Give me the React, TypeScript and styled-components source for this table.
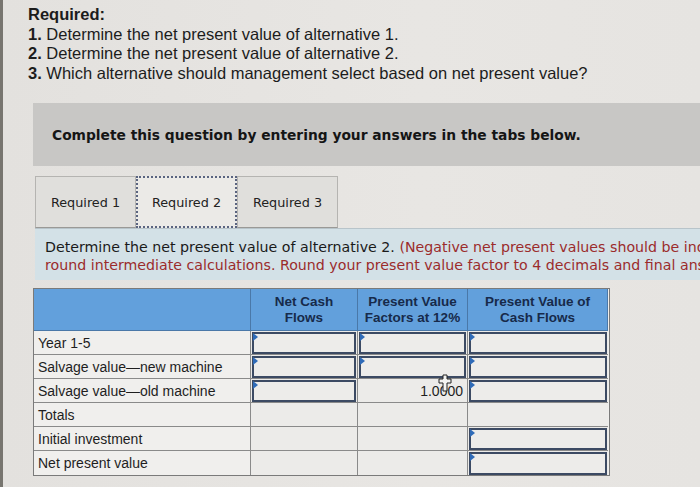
import React from "react";
import styled, { createGlobalStyle } from "styled-components";

const GlobalStyle = createGlobalStyle`
  html, body { margin: 0; padding: 0; }
  body { background: #e5e3e0; }
`;

const Page = styled.div`
  width: 700px;
  height: 487px;
  overflow: hidden;
  box-sizing: border-box;
  border-left: 3px solid #77756f;
  background: linear-gradient(90deg, #e3e1de 0%, #e8e6e3 60%, #e6e4e1 100%);
  display: flex;
  flex-direction: column;
`;

const Required = styled.div`
  padding: 5px 0 0 25px;
  font-family: "Liberation Sans", Arial, sans-serif;
  font-size: 16.5px;
  line-height: 19.5px;
  color: #1c1c1c;
`;

const ReqTitle = styled.div`
  font-weight: 700;
`;

const ReqLine = styled.div`
  & b { font-weight: 700; }
`;

const Banner = styled.div`
  margin: 20px 0 0 30px;
  height: 63px;
  background: #c8c7c5;
  display: flex;
  align-items: center;
  padding-left: 19px;
  font-family: "DejaVu Sans", Verdana, sans-serif;
  font-weight: 700;
  font-size: 13.8px;
  color: #151515;
  white-space: nowrap;
`;

const Tabs = styled.div`
  margin: 10px 0 0 32px;
  display: flex;
  height: 52px;
`;

const Tab = styled.div<{ $active?: boolean }>`
  width: 101px;
  box-sizing: border-box;
  display: flex;
  align-items: center;
  justify-content: center;
  font-family: "DejaVu Sans", Verdana, sans-serif;
  font-size: 12.8px;
  color: #222;
  background: ${(p) => (p.$active ? "#ebeae7" : "#e0dfdc")};
  border: ${(p) => (p.$active ? "2px dotted #5a6480" : "1px solid #b5b4b1")};
  border-bottom: ${(p) => (p.$active ? "2px dotted #5a6480" : "1px solid #9a9996")};
`;

const Instruction = styled.div`
  margin-left: 32px;
  height: 52px;
  box-sizing: border-box;
  background: #d3e1e7;
  border-top: 1px solid #b8c4ca;
  padding: 9px 0 0 10px;
  font-family: "DejaVu Sans", Verdana, sans-serif;
  font-size: 14.2px;
  line-height: 18px;
  color: #1a1a1a;
  white-space: nowrap;
  overflow: hidden;
`;

const Red = styled.span`
  color: #9b2c2c;
`;

const Table = styled.div`
  margin: 8px 0 0 30px;
  width: 575px;
  display: grid;
  grid-template-columns: 217px 107px 110px 140px;
  border: 1px solid #7a7a7a;
  background: #efeeec;
  position: relative;
`;

const Head = styled.div`
  height: 41px;
  background: #62a0dc;
  border-right: 1px solid #4a78a8;
  border-bottom: 1px solid #4a78a8;
  display: flex;
  align-items: center;
  justify-content: center;
  text-align: center;
  font-family: "Liberation Sans", Arial, sans-serif;
  font-weight: 700;
  font-size: 13.5px;
  line-height: 16px;
  color: #172a4a;
  &:last-child { border-right: none; }
`;

const Label = styled.div<{ $last?: boolean }>`
  height: 24px;
  box-sizing: border-box;
  border-right: 1px solid #8a8a8a;
  border-bottom: ${(p) => (p.$last ? "none" : "1px solid #8a8a8a")};
  display: flex;
  align-items: center;
  padding-left: 4px;
  font-family: "Liberation Sans", Arial, sans-serif;
  font-size: 14px;
  color: #1e1e1e;
  background: #f0efed;
`;

const Cell = styled.div<{ $last?: boolean; $end?: boolean }>`
  height: 24px;
  box-sizing: border-box;
  border-right: ${(p) => (p.$end ? "none" : "1px solid #8a8a8a")};
  border-bottom: ${(p) => (p.$last ? "none" : "1px solid #8a8a8a")};
  background: #ecebe9;
  display: flex;
  align-items: center;
  justify-content: flex-end;
  padding-right: 4px;
  font-family: "Liberation Sans", Arial, sans-serif;
  font-size: 14px;
  color: #1e1e1e;
  position: relative;
`;

const InputCell = styled.div<{ $last?: boolean; $end?: boolean }>`
  height: 24px;
  box-sizing: border-box;
  border-right: ${(p) => (p.$end ? "none" : "1px solid #8a8a8a")};
  border-bottom: ${(p) => (p.$last ? "none" : "1px solid #8a8a8a")};
  background: #ecebe9;
  display: flex;
  padding: 1px 1px 0 1px;
  position: relative;
`;

const InputBox = styled.div`
  flex: 1;
  box-sizing: border-box;
  border: 2px solid #3c4a63;
  background: #edecea;
  position: relative;
  &::before {
    content: "";
    position: absolute;
    left: -1px;
    top: -1px;
    border-top: 4px solid transparent;
    border-bottom: 4px solid transparent;
    border-left: 5px solid #2f6bb8;
  }
`;

const Cursor = styled.svg`
  position: absolute;
  right: 14px;
  top: -5px;
`;

type Kind = "in" | "empty" | "factor";

const rows: { label: string; cells: Kind[] }[] = [
  { label: "Year 1-5", cells: ["in", "in", "in"] },
  { label: "Salvage value\u2014new machine", cells: ["in", "in", "in"] },
  { label: "Salvage value\u2014old machine", cells: ["in", "factor", "in"] },
  { label: "Totals", cells: ["empty", "empty", "empty"] },
  { label: "Initial investment", cells: ["empty", "empty", "in"] },
  { label: "Net present value", cells: ["empty", "empty", "in"] },
];

export default function App() {
  return (
    <>
      <GlobalStyle />
      <Page>
        <Required>
          <ReqTitle>Required:</ReqTitle>
          <ReqLine><b>1.</b> Determine the net present value of alternative 1.</ReqLine>
          <ReqLine><b>2.</b> Determine the net present value of alternative 2.</ReqLine>
          <ReqLine><b>3.</b> Which alternative should management select based on net present value?</ReqLine>
        </Required>
        <Banner>Complete this question by entering your answers in the tabs below.</Banner>
        <Tabs>
          <Tab>Required 1</Tab>
          <Tab $active>Required 2</Tab>
          <Tab>Required 3</Tab>
        </Tabs>
        <Instruction>
          Determine the net present value of alternative 2. <Red>(Negative net present values should be indicated by a minus sign. Do not</Red>
          <br />
          <Red>round intermediate calculations. Round your present value factor to 4 decimals and final answers to the nearest whole dollar.)</Red>
        </Instruction>
        <Table>
          <Head />
          <Head>Net Cash<br />Flows</Head>
          <Head>Present Value<br />Factors at 12%</Head>
          <Head>Present Value of<br />Cash Flows</Head>
          {rows.map((r, i) => {
            const last = i === rows.length - 1;
            return (
              <React.Fragment key={r.label}>
                <Label $last={last}>{r.label}</Label>
                {r.cells.map((k, j) => {
                  const end = j === 2;
                  if (k === "in")
                    return (
                      <InputCell key={j} $last={last} $end={end}>
                        <InputBox />
                      </InputCell>
                    );
                  if (k === "factor")
                    return (
                      <Cell key={j} $last={last} $end={end}>
                        1.0000
                        <Cursor width="16" height="18" viewBox="0 0 16 18">
                          <path
                            d="M6 1h4v4h4v4h-4v8H6V9H2V5h4z"
                            fill="#f4f4f2"
                            stroke="#222"
                            strokeWidth="1"
                          />
                        </Cursor>
                      </Cell>
                    );
                  return <Cell key={j} $last={last} $end={end} />;
                })}
              </React.Fragment>
            );
          })}
        </Table>
      </Page>
    </>
  );
}
